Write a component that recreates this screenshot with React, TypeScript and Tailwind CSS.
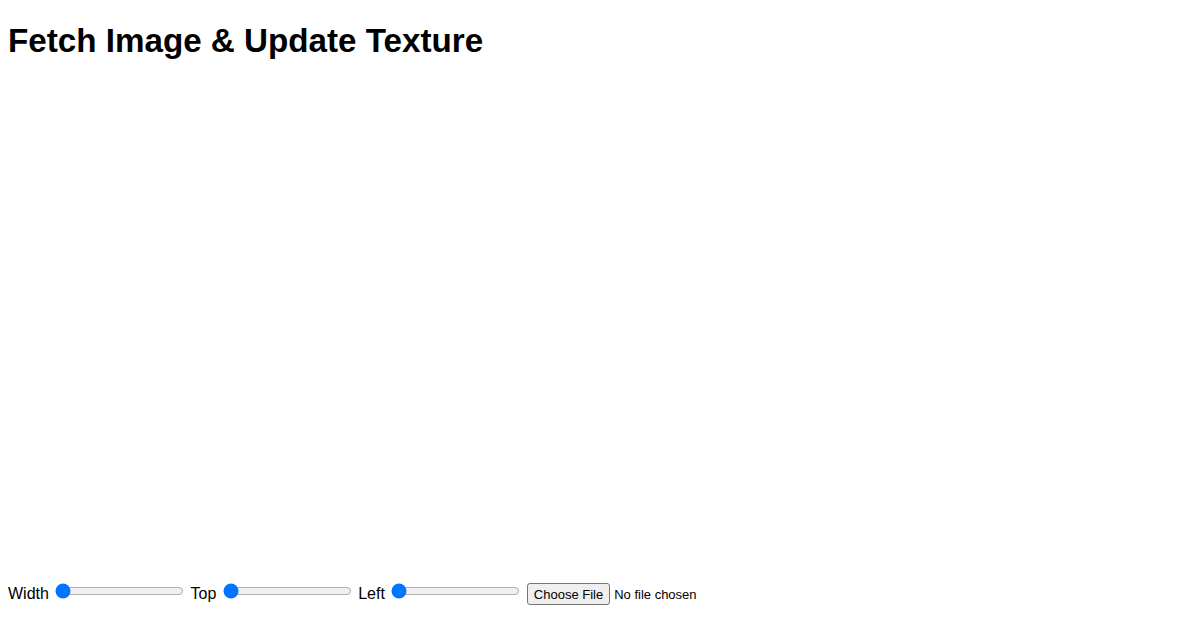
export default function App() {
  return (
    <div className="bg-white text-black p-2 font-['Liberation_Sans',Arial,sans-serif] leading-[normal] min-h-[630px]">
      <h1 className="text-[33.2px] font-bold leading-[normal] mt-[13.5px] mb-[21px]">Fetch Image &amp; Update Texture</h1>
      <div className="h-[500px]" />
      <div className="text-base leading-[normal]">
        Width <input type="range" className="m-[2px] w-[129px]" defaultValue={0} />{" "}
        Top <input type="range" className="m-[2px] w-[129px]" defaultValue={0} />{" "}
        Left <input type="range" className="m-[2px] w-[129px]" defaultValue={0} />{" "}
        <input
          type="file"
          className="text-[13px] file:text-[13px] file:bg-[#efefef] file:border file:border-[#767676] file:rounded-[3px] file:px-[6px] file:py-[2.5px] file:mr-[4px] file:text-black"
        />
      </div>
    </div>
  );
}
